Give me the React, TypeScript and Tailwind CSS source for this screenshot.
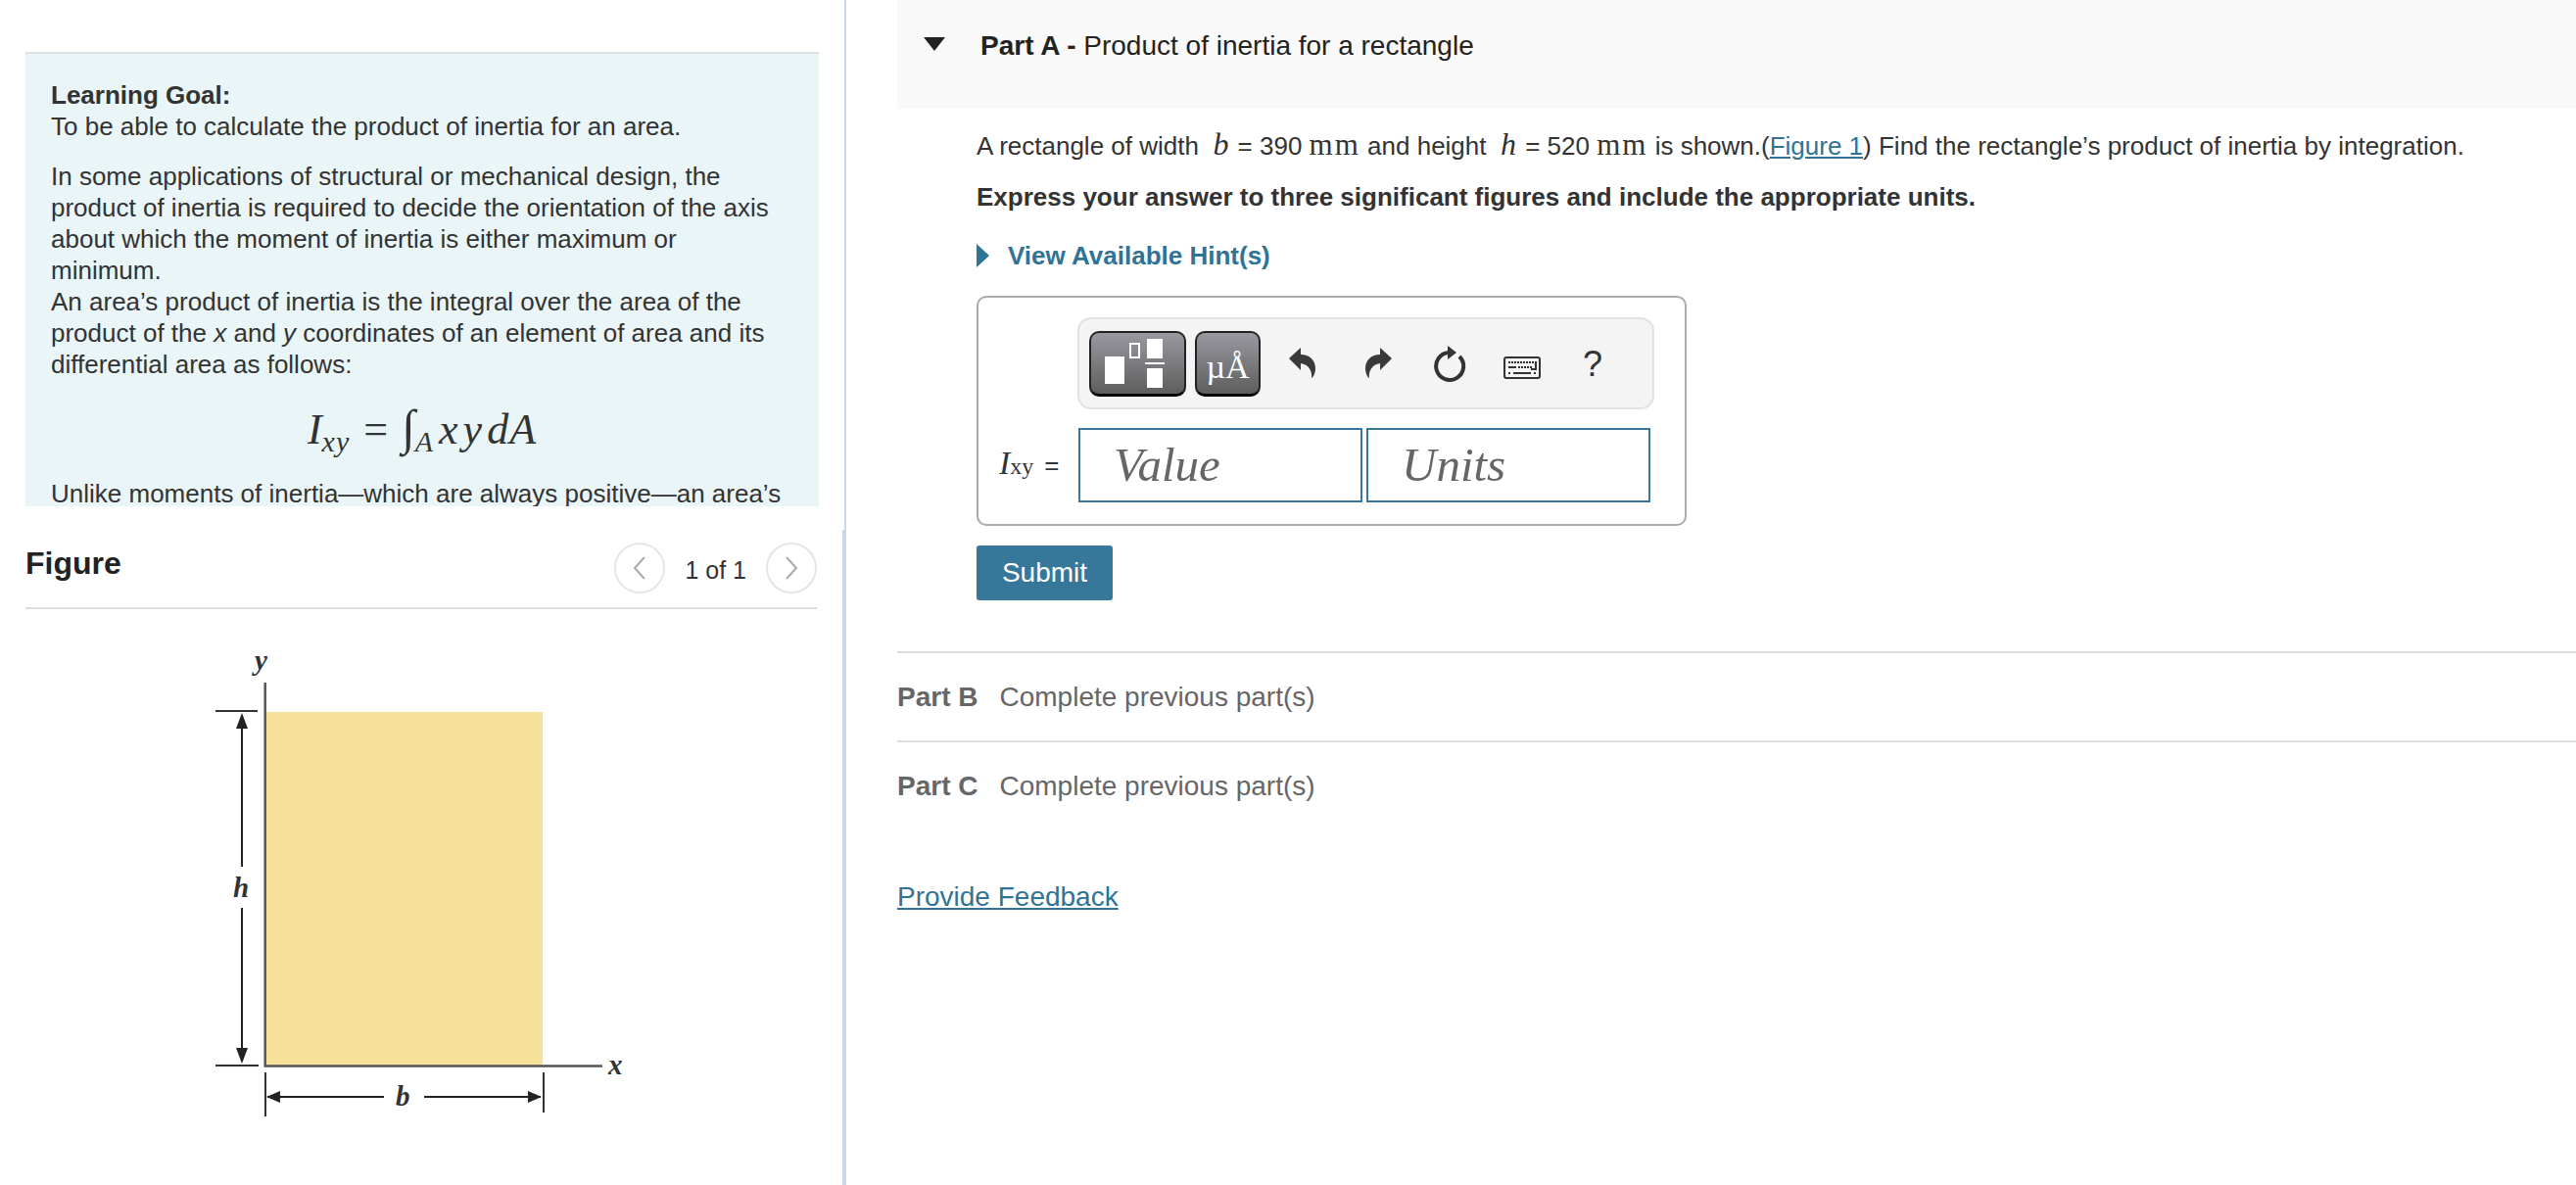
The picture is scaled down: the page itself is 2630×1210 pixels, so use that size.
import React from "react";

const sans = "font-['Liberation_Sans',Arial,sans-serif]";
const serif = "font-['Liberation_Serif','Times_New_Roman',serif]";

function Undo({ flip = false }: { flip?: boolean }) {
  return (
    <svg width="28" height="32" viewBox="0 0 28 32" className={flip ? "-scale-x-100" : ""}>
      <path d="M0 11 L12 0 V7 C21 7 27 13 27 21 C27 26 25 30 23 31 C24 24 20 17 12 16 V23 Z" fill="#3a3a3a" />
    </svg>
  );
}

function Keyboard() {
  const row1 = [5, 8, 11, 14, 17, 20, 23, 26, 29];
  const row2 = [15, 18, 21, 24, 27];
  return (
    <svg width="38" height="23" viewBox="0 0 38 23" className="ml-[38px] mt-[8px]">
      <rect x="1" y="1" width="36" height="21" rx="2" fill="#f4f4f4" stroke="#333" strokeWidth="2" />
      {row1.map((x) => <rect key={x} x={x} y="5" width="2" height="2" fill="#333" />)}
      {row2.map((x) => <rect key={x} x={x} y="10" width="2" height="2" fill="#333" />)}
      <rect x="5" y="10" width="8" height="2" fill="#333" />
      <rect x="32" y="5" width="2" height="9" fill="#333" />
      <rect x="28" y="12" width="5" height="2" fill="#333" />
      <rect x="5" y="16" width="2" height="2" fill="#333" />
      <rect x="10" y="16" width="18" height="2" fill="#333" />
      <rect x="31" y="16" width="2" height="2" fill="#333" />
    </svg>
  );
}

function Figure1() {
  return (
    <svg width="500" height="570" viewBox="0 0 500 570" className="block">
      <rect x="91" y="87" width="283" height="361" fill="#f5e198" />
      <path d="M90.7 57 V448.5 H435" fill="none" stroke="#555" strokeWidth="2.5" />
      <path d="M40 86 H83 M40 448 H84" stroke="#333" strokeWidth="2" />
      <path d="M67 96 V245 M67 287 V438" stroke="#222" strokeWidth="2" />
      <path d="M67 88 L61 104 H73 Z M67 446 L61 430 H73 Z" fill="#222" />
      <path d="M91 455 V500 M375 455 V496" stroke="#333" strokeWidth="2" />
      <path d="M93 480 H212 M253 480 H372" stroke="#222" strokeWidth="2" />
      <path d="M92 480 L106 474 V486 Z M373 480 L359 474 V486 Z" fill="#222" />
      <g className={serif} fontStyle="italic" fontWeight="700" fontSize="29" fill="#333">
        <text x="80" y="44">y</text>
        <text x="58" y="276">h</text>
        <text x="224" y="489">b</text>
        <text x="441" y="457">x</text>
      </g>
    </svg>
  );
}

function MathVar({ children }: { children: React.ReactNode }) {
  return <span className={`${serif} italic text-[32px] leading-[26px] tracking-[2px]`}>{children}</span>;
}

function Unit() {
  return <span className={`${serif} text-[31px] leading-[26px] tracking-[2px]`}>mm</span>;
}

function Chevron({ left = false }: { left?: boolean }) {
  return (
    <div className="w-[52px] h-[52px] rounded-full border-2 border-[#e6e6e6] flex items-center justify-center">
      <svg width="14" height="26" viewBox="0 0 14 26">
        <path d={left ? "M12 2 L2 13 L12 24" : "M2 2 L12 13 L2 24"} fill="none" stroke="#a9a9a9" strokeWidth="2" />
      </svg>
    </div>
  );
}

function LockedPart({ name }: { name: string }) {
  return (
    <div className="h-[91px] border-t-2 border-[#dcdcdc] flex items-center gap-[22px] text-[28px] text-[#666]">
      <span className="font-bold">{name}</span>
      <span>Complete previous part(s)</span>
    </div>
  );
}

export default function App() {
  return (
    <div className={`${sans} flex w-[2630px] h-[1210px] bg-white text-[#333] overflow-hidden`}>
      <div className="w-[864px] shrink-0 flex flex-col">
        <div className="h-[541px] border-r-2 border-[#ccd6e6] pt-[53px] pl-[26px] pr-[24px]">
          <div className="h-[464px] w-[810px] overflow-hidden bg-[#e9f5f7] border-t-2 border-[#d9e2e2] pt-[26px] px-[26px] text-[26px] leading-[32px]">
            <p className="font-bold">Learning Goal:</p>
            <p>To be able to calculate the product of inertia for an area.</p>
            <p className="mt-[19px]">
              In some applications of structural or mechanical design, the product of inertia is required to decide the orientation of the axis about which the moment of inertia is either maximum or minimum.
            </p>
            <p>
              An area’s product of inertia is the integral over the area of the product of the <i>x</i> and <i>y</i> coordinates of an element of area and its differential area as follows:
            </p>
            <div className={`${serif} italic flex justify-center items-baseline text-[44px] leading-[48px] mt-[24px] mb-[28px] h-[48px]`}>
              <span>I</span>
              <span className="text-[30px] translate-y-[8px] tracking-[1px]">xy</span>
              <span className="not-italic mx-[14px]">=</span>
              <span className="not-italic text-[50px]">∫</span>
              <span className="text-[30px] translate-y-[8px] mr-[6px]">A</span>
              <span className="tracking-[5px]">xy</span>
              <span className="tracking-[1px]">dA</span>
            </div>
            <p>Unlike moments of inertia—which are always positive—an area’s product of inertia can be positive, negative, or zero.</p>
          </div>
        </div>
        <div className="flex-1 border-r-[4px] border-[#ccd6e6] pl-[26px] pr-[24px]">
          <div className="w-[808px] h-[81px] border-b-2 border-[#dcdcdc] flex items-start justify-between">
            <span className="font-bold text-[32px] leading-[40px] text-[#222] mt-[14px]">Figure</span>
            <div className="flex items-center gap-[20px] mt-[13px] text-[25px]">
              <Chevron left />
              <span className="translate-y-[3px]">1 of 1</span>
              <Chevron />
            </div>
          </div>
          <div className="pl-[154px] pt-[18px]">
            <Figure1 />
          </div>
        </div>
      </div>

      <div className="flex-1 pl-[52px]">
        <div className="h-[111px] bg-[#f9f9f9] flex items-start pt-[30px] pl-[27px] text-[28px] leading-[34px] text-[#222]">
          <svg width="22" height="14" viewBox="0 0 22 14" className="mt-[8px] mr-[36px]">
            <path d="M0 0 H22 L11 14 Z" fill="#222" />
          </svg>
          <span><b>Part A - </b>Product of inertia for a rectangle</span>
        </div>
        <div className="pl-[81px] text-[26px] text-[#333]">
          <p className="mt-[21px] h-[34px] leading-[34px] whitespace-nowrap">
            A rectangle of width &nbsp;<MathVar>b</MathVar> = 390 <Unit /> and height &nbsp;<MathVar>h</MathVar> = 520 <Unit /> is shown.(<span className="text-[#2f7396] underline">Figure 1</span>) Find the rectangle’s product of inertia by integration.
          </p>
          <p className="mt-[18px] leading-[34px] font-bold">Express your answer to three significant figures and include the appropriate units.</p>
          <div className="mt-[26px] flex items-center h-[34px] text-[#2f7396] font-bold">
            <svg width="13" height="24" viewBox="0 0 13 24" className="mr-[19px]">
              <path d="M0 0 L13 12 L0 24 Z" fill="#2f7396" />
            </svg>
            View Available Hint(s)
          </div>

          <div className="mt-[24px] w-[725px] h-[235px] border-2 border-[#aaa] rounded-[10px] pt-[20px] pl-[102px]">
            <div className="-ml-[1px] w-[589px] h-[94px] rounded-[14px] bg-[#f4f4f4] border-2 border-[#e2e2e2] flex items-center pl-[10px]">
              <div className="w-[99px] h-[67px] rounded-[10px] border-2 border-b-[3px] border-[#222] border-b-black bg-linear-to-b from-[#9a99a1] to-[#5e5e5e] pl-[14px] pt-[6px]">
                <svg width="62" height="52" viewBox="0 0 62 52" className="block">
                  <rect x="0" y="18" width="20" height="28" fill="#fff" />
                  <rect x="26" y="5" width="9" height="14" fill="none" stroke="#fff" strokeWidth="2" />
                  <rect x="43" y="0" width="16" height="20" fill="#fff" />
                  <rect x="41" y="24" width="20" height="2" fill="#fff" />
                  <rect x="43" y="30" width="16" height="20" fill="#fff" />
                </svg>
              </div>
              <div className={`${serif} ml-[9px] w-[67px] h-[67px] rounded-[10px] border-2 border-b-[3px] border-[#222] border-b-black bg-linear-to-b from-[#9a99a1] to-[#5e5e5e] text-white text-[34px] flex items-center justify-center pt-[8px]`}>
                µÅ
              </div>
              <div className="ml-[29px]"><Undo /></div>
              <div className="ml-[49px]"><Undo flip /></div>
              <svg width="34" height="38" viewBox="0 0 34 38" className="ml-[42px]">
                <path d="M16 8 A14 14 0 1 0 27 12" fill="none" stroke="#333" strokeWidth="4" />
                <path d="M15 1 L24 8 L15 15 Z" fill="#333" />
              </svg>
              <Keyboard />
              <span className="ml-[43px] text-[36px] text-[#333] translate-y-[1px]">?</span>
            </div>
            <div className="relative flex gap-[4px] mt-[19px]">
              <span className={`${serif} absolute -left-[81px] top-[18px] text-[28px] leading-[36px] whitespace-nowrap`}>
                <i className="text-[34px]">I</i><span className="text-[24px]">xy</span> <span className={`${sans} text-[26px] ml-[4px]`}>=</span>
              </span>
              <div className={`${serif} italic w-[290px] h-[76px] border-2 border-[#37789a] text-[49px] text-[#666] flex items-center pl-[34px]`}>Value</div>
              <div className={`${serif} italic w-[290px] h-[76px] border-2 border-[#37789a] text-[49px] text-[#666] flex items-center pl-[34px]`}>Units</div>
            </div>
          </div>

          <div className="mt-[20px] w-[139px] h-[56px] bg-[#37789a] rounded-[3px] text-white text-[28px] flex items-center justify-center">Submit</div>
        </div>

        <div className="mt-[52px]">
          <LockedPart name="Part B" />
          <LockedPart name="Part C" />
        </div>
        <p className="mt-[52px] text-[28px] leading-[34px] text-[#2f7396] underline">Provide Feedback</p>
      </div>
    </div>
  );
}
